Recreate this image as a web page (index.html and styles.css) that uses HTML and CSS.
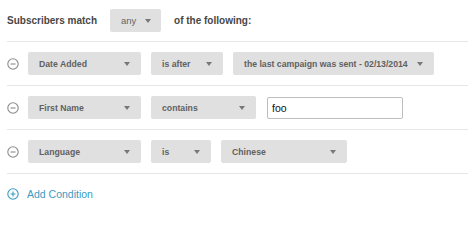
FILE: index.html
```html
<!DOCTYPE html>
<html>
<head>
<meta charset="utf-8">
<link rel="stylesheet" href="styles.css">
</head>
<body>
<div class="builder">
  <div class="header">
    <span class="title">Subscribers match</span>
    <div class="select any"><span>any</span><svg class="caret" width="6" height="4" viewBox="0 0 6 4"><path d="M0 0h6L3 4z"/></svg></div>
    <span class="title">of the following:</span>
  </div>

  <div class="row">
    <svg class="icon" width="12" height="12" viewBox="0 0 12 12"><circle cx="6" cy="6" r="5.2"/><path d="M3.5 6h5"/></svg>
    <div class="select w-field"><span>Date Added</span><svg class="caret" width="6" height="4" viewBox="0 0 6 4"><path d="M0 0h6L3 4z"/></svg></div>
    <div class="select w-after"><span>is after</span><svg class="caret" width="6" height="4" viewBox="0 0 6 4"><path d="M0 0h6L3 4z"/></svg></div>
    <div class="select w-campaign"><span>the last campaign was sent - 02/13/2014</span><svg class="caret" width="6" height="4" viewBox="0 0 6 4"><path d="M0 0h6L3 4z"/></svg></div>
  </div>

  <div class="row">
    <svg class="icon" width="12" height="12" viewBox="0 0 12 12"><circle cx="6" cy="6" r="5.2"/><path d="M3.5 6h5"/></svg>
    <div class="select w-field"><span>First Name</span><svg class="caret" width="6" height="4" viewBox="0 0 6 4"><path d="M0 0h6L3 4z"/></svg></div>
    <div class="select w-contains"><span>contains</span><svg class="caret" width="6" height="4" viewBox="0 0 6 4"><path d="M0 0h6L3 4z"/></svg></div>
    <input class="text-input" type="text" value="foo">
  </div>

  <div class="row">
    <svg class="icon" width="12" height="12" viewBox="0 0 12 12"><circle cx="6" cy="6" r="5.2"/><path d="M3.5 6h5"/></svg>
    <div class="select w-field"><span>Language</span><svg class="caret" width="6" height="4" viewBox="0 0 6 4"><path d="M0 0h6L3 4z"/></svg></div>
    <div class="select w-is"><span>is</span><svg class="caret" width="6" height="4" viewBox="0 0 6 4"><path d="M0 0h6L3 4z"/></svg></div>
    <div class="select w-lang"><span>Chinese</span><svg class="caret" width="6" height="4" viewBox="0 0 6 4"><path d="M0 0h6L3 4z"/></svg></div>
  </div>

  <div class="add">
    <svg class="icon add-icon" width="12" height="12" viewBox="0 0 12 12"><circle cx="6" cy="6" r="5.2"/><path d="M3.5 6h5M6 3.5v5"/></svg>
    <span>Add Condition</span>
  </div>
</div>
</body>
</html>
```

FILE: styles.css
```css
html, body {
  margin: 0;
  padding: 0;
  background: #fff;
}

body {
  font-family: "Liberation Sans", Arial, sans-serif;
}

.builder {
  width: 461px;
  margin-left: 7px;
}

.header {
  display: flex;
  align-items: center;
  gap: 13px;
  padding: 9px 0;
  border-bottom: 1px solid #e6e6e6;
}

.title {
  font-size: 10px;
  font-weight: bold;
  color: #474747;
}

.select {
  box-sizing: border-box;
  height: 23px;
  display: flex;
  align-items: center;
  justify-content: space-between;
  padding: 0 11px;
  background: #e0e0e0;
  border-radius: 2px;
  font-size: 8.7px;
  font-weight: bold;
  color: #606060;
  white-space: nowrap;
}

.caret {
  fill: #777;
  flex: none;
}

.any {
  width: 51px;
  font-weight: normal;
  font-size: 9.5px;
  color: #666;
  padding: 0 10px 0 11px;
}

.row {
  display: flex;
  align-items: center;
  gap: 10px;
  padding: 10px 0;
  border-bottom: 1px solid #e6e6e6;
}

.icon {
  flex: none;
  margin-right: -1px;
  fill: none;
  stroke: #8a8a8a;
  stroke-width: 1.1;
}

.w-field { width: 113px; }
.w-after { width: 72px; }
.w-campaign { width: 201px; }
.w-contains { width: 105px; margin-right: 1px; }
.w-is { width: 60px; }
.w-lang { width: 126px; }

.text-input {
  box-sizing: border-box;
  width: 136px;
  height: 22px;
  margin: 0;
  padding: 0 4px;
  border: 1px solid #bdbdbd;
  border-radius: 2px;
  font-family: "Liberation Sans", Arial, sans-serif;
  font-size: 10.5px;
  color: #111;
  background: #fff;
  outline: none;
}

.add {
  display: flex;
  align-items: center;
  gap: 9px;
  padding-top: 14px;
  font-size: 10.5px;
  color: #3a9cbf;
}

.add-icon {
  stroke: #3a9cbf;
}
```
